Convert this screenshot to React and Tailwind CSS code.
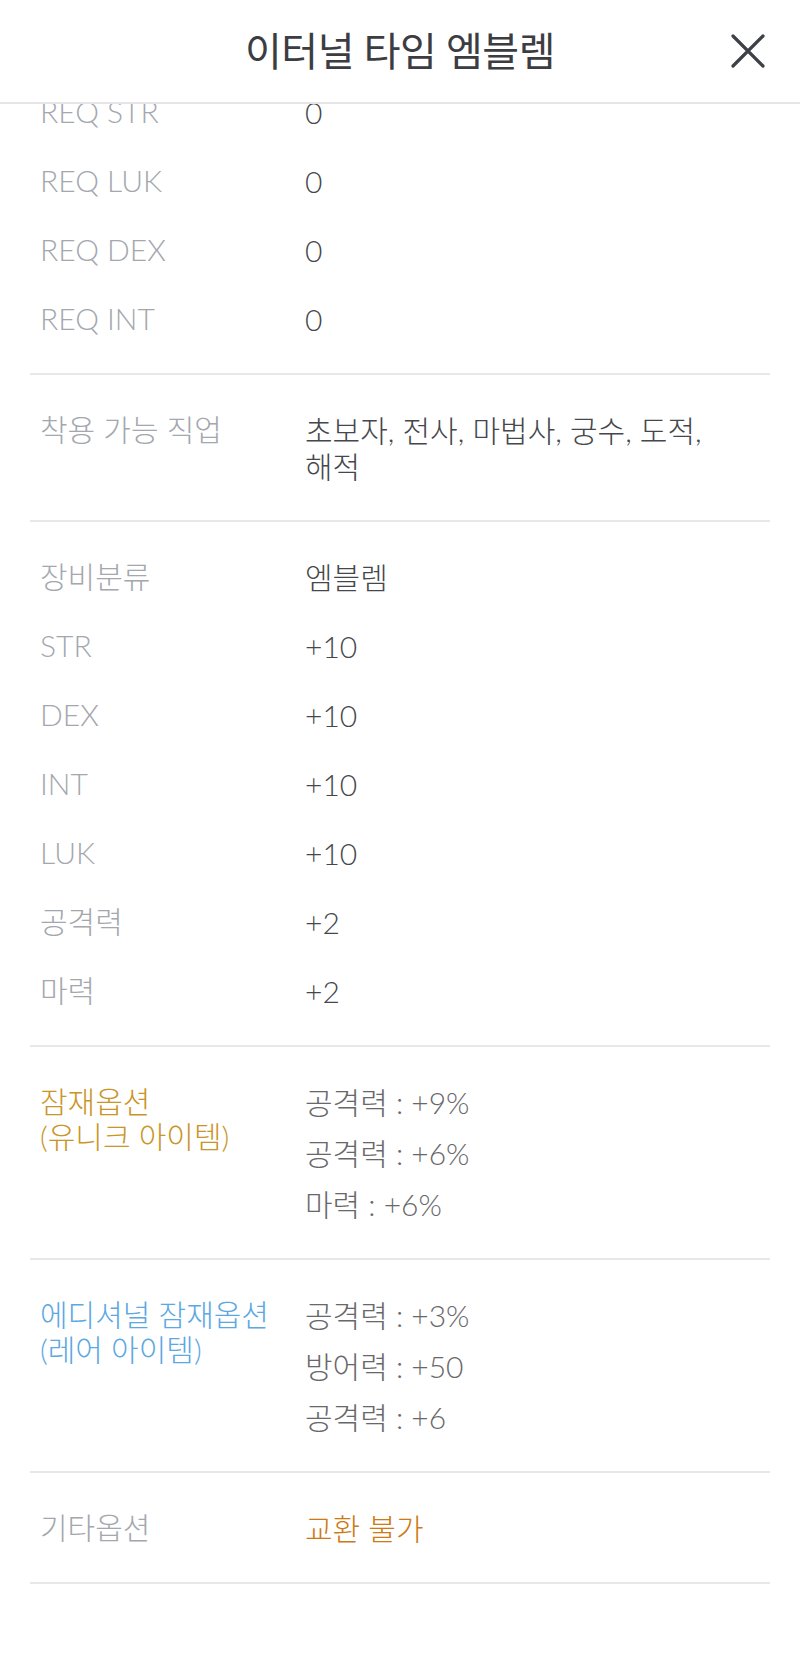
const FONT = { fontFamily: 'Lato, "Noto Sans CJK KR", sans-serif' }

const reqRows = [
  { label: 'REQ STR', value: '0' },
  { label: 'REQ LUK', value: '0' },
  { label: 'REQ DEX', value: '0' },
  { label: 'REQ INT', value: '0' },
]

const statRows = [
  { label: '장비분류', value: '엠블렘' },
  { label: 'STR', value: '+10' },
  { label: 'DEX', value: '+10' },
  { label: 'INT', value: '+10' },
  { label: 'LUK', value: '+10' },
  { label: '공격력', value: '+2' },
  { label: '마력', value: '+2' },
]

function Row({ label, children, labelClass = 'text-[#a4a7ae]' }) {
  return (
    <div className="flex py-[16.5px]">
      <div className={`w-[275px] shrink-0 pl-[10px] leading-[35px] break-keep ${labelClass}`}>{label}</div>
      <div className="flex-1 pr-[10px] leading-[36px] break-keep text-[#45474c]">{children}</div>
    </div>
  )
}

function Section({ children }) {
  return (
    <>
      <div className="py-[20px]">{children}</div>
      <div className="h-[2px] bg-[#e8e8ea]" />
    </>
  )
}

function CloseIcon() {
  return (
    <svg width="34" height="34" viewBox="0 0 34 34" fill="none">
      <path d="M2 2L32 32M32 2L2 32" stroke="#3d4047" strokeWidth="3.2" strokeLinecap="round" />
    </svg>
  )
}

export default function App() {
  return (
    <div className="h-[1673px] overflow-hidden bg-white font-light" style={FONT}>
      <header className="relative z-10 h-[104px] grid grid-cols-[1fr_auto_1fr] items-center bg-white border-b-2 border-[#e6e6e8]">
        <div />
        <h1 className="text-[40px] font-normal text-[#3b3d42] tracking-[-0.5px]">이터널 타임 엠블렘</h1>
        <div className="flex justify-end pr-[35px]">
          <button type="button" aria-label="닫기" className="p-0">
            <CloseIcon />
          </button>
        </div>
      </header>

      <main className="-mt-[47px] px-[30px] text-[30px]">
        <Section>
          {reqRows.map((r) => (
            <Row key={r.label} label={r.label}>{r.value}</Row>
          ))}
        </Section>

        <Section>
          <Row label="착용 가능 직업">초보자, 전사, 마법사, 궁수, 도적, 해적</Row>
        </Section>

        <Section>
          {statRows.map((r) => (
            <Row key={r.label} label={r.label}>{r.value}</Row>
          ))}
        </Section>

        <Section>
          <Row label={<>잠재옵션<br />(유니크 아이템)</>} labelClass="text-[#c99527]">
            <div className="flex flex-col gap-[15px] text-[#68686b]">
              <span>공격력 : +9%</span>
              <span>공격력 : +6%</span>
              <span>마력 : +6%</span>
            </div>
          </Row>
        </Section>

        <Section>
          <Row label={<>에디셔널 잠재옵션<br />(레어 아이템)</>} labelClass="text-[#5ba8e2]">
            <div className="flex flex-col gap-[15px] text-[#68686b]">
              <span>공격력 : +3%</span>
              <span>방어력 : +50</span>
              <span>공격력 : +6</span>
            </div>
          </Row>
        </Section>

        <Section>
          <Row label="기타옵션">
            <span className="text-[#cc7a12]">교환 불가</span>
          </Row>
        </Section>
      </main>
    </div>
  )
}
